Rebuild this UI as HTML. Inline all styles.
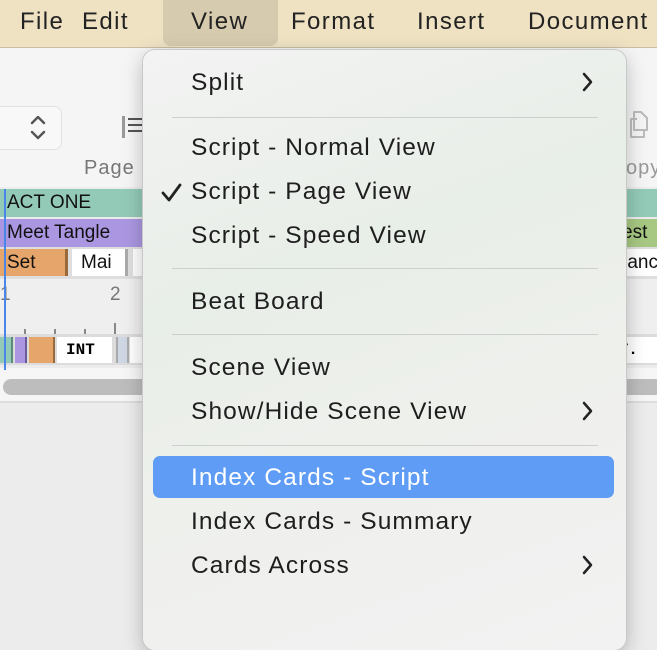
<!DOCTYPE html><html><head><style>
body{margin:0;width:657px;height:594px;overflow:hidden;position:relative;font-family:"Liberation Sans",sans-serif;background:#ececec}
.a{position:absolute}
.mb{top:0;left:0;width:657px;height:47px;background:#efe2c3;border-bottom:1px solid #c9bda3}
.mb span{position:absolute;top:8px;font-size:24px;color:#222;letter-spacing:1.4px}
.menu{left:143px;top:50px;width:483px;height:600px;border-radius:12px;background:linear-gradient(160deg,#f3f3f3 0%,#e8eee8 35%,#eef0ec 60%,#f2f2f2 100%);box-shadow:0 0 0 1px #c8c8c8,0 6px 20px rgba(0,0,0,.25)}
.it{position:absolute;left:48px;font-size:24.5px;color:#1e1e1e;letter-spacing:1.1px}
.sep{position:absolute;left:29px;width:426px;height:1px;background:#cfcfcf}
.chev{position:absolute;left:438px;width:12px;height:20px}
.bar{position:absolute;font-size:19px;color:#111;line-height:28px;padding-left:7px;box-sizing:border-box}
</style></head><body>
<div class="a" style="top:47px;left:0;width:657px;height:140px;background:#f5f5f5"></div>
<div class="a" style="left:-10px;top:106px;width:70px;height:42px;border:1px solid #e0e0e0;border-radius:8px;background:#f8f8f8"></div>
<svg class="a" style="left:29px;top:115px" width="18" height="26"><path d="M3 8 L9 2 L15 8 M3 17 L9 23 L15 17" fill="none" stroke="#555" stroke-width="2.4" stroke-linecap="round" stroke-linejoin="round"/></svg>
<div class="a" style="left:122px;top:116px;width:3px;height:22px;background:#999"></div>
<div class="a" style="left:128px;top:118px;width:14px;height:2px;background:#555;box-shadow:0 6px #555,0 12px #555"></div>
<div class="a" style="left:84px;top:157px;font-size:20px;color:#777;letter-spacing:1px">Page</div>
<div class="a" style="left:626px;top:157px;font-size:20px;color:#999;letter-spacing:1px">opy</div>
<svg class="a" style="left:624px;top:108px" width="30" height="34"><path d="M10 4 h7 l6 6 v12 h-13 z M13 11 h-6 v18 h13 v-7" fill="none" stroke="#bbb" stroke-width="2" stroke-linejoin="round"/></svg>
<div class="bar" style="left:0;top:189px;width:657px;height:28px;background:#93cab7">ACT ONE</div>
<div class="bar" style="left:0;top:219px;width:657px;height:28px;background:#ab97e1">Meet Tangle</div>
<div class="bar" style="left:590px;top:219px;width:67px;height:28px;background:#a7c883;padding-left:32px">est</div>
<div class="a" style="left:0;top:247px;width:657px;height:32px;background:#dedede"></div>
<div class="bar" style="left:0;top:249px;width:68px;height:27px;background:#e6a66b;border-right:3px solid #9a6a3c">Set</div>
<div class="bar" style="left:72px;top:249px;width:56px;height:27px;background:#fff;padding-left:9px;border-right:3px solid #aaa">Mai</div>
<div class="bar" style="left:133px;top:249px;width:20px;height:27px;background:#fff"></div>
<div class="bar" style="left:615px;top:249px;width:42px;height:27px;background:#fff;padding-left:6px">ranc</div>
<div class="a" style="left:0;top:279px;width:657px;height:55px;background:#efefef"></div>
<div class="a" style="left:0;top:284px;font-size:19px;color:#777">1</div>
<div class="a" style="left:110px;top:284px;font-size:19px;color:#777">2</div>
<div class="a" style="left:24px;top:329px;width:2px;height:6px;background:#888;box-shadow:30px 0 #888,60px 0 #888"></div>
<div class="a" style="left:114px;top:323px;width:2px;height:12px;background:#888"></div>
<div class="a" style="left:0;top:334px;width:657px;height:31px;background:#dcdcdc"></div>
<div class="a" style="left:0;top:337px;width:11px;height:26px;background:#93cab7;border-right:2px solid #5a8a78"></div>
<div class="a" style="left:15px;top:337px;width:10px;height:26px;background:#ab97e1;border-right:2px solid #6a5a9a"></div>
<div class="a" style="left:29px;top:337px;width:24px;height:26px;background:#e6a66b;border-right:2px solid #9a6a3c"></div>
<div class="a" style="left:57px;top:337px;width:55px;height:26px;background:#fff;font:bold 16px 'Liberation Mono',monospace;line-height:26px;text-indent:9px">INT</div>
<div class="a" style="left:116px;top:337px;width:9px;height:26px;background:#cfd6e4;border-left:2px solid #aaa;border-right:2px solid #aaa"></div>
<div class="a" style="left:130px;top:337px;width:20px;height:26px;background:#fff"></div>
<div class="a" style="left:605px;top:337px;width:52px;height:26px;background:#fff;font:bold 16px 'Liberation Mono',monospace;line-height:26px;text-indent:4px">XT.</div>
<div class="a" style="left:0;top:368px;width:657px;height:33px;background:#f6f6f6;border-bottom:2px solid #ddd"></div>
<div class="a" style="left:3px;top:379px;width:660px;height:16px;border-radius:8px;background:#bdbdbd"></div>
<div class="a" style="left:4px;top:189px;width:2px;height:181px;background:#4a86e8"></div>
<div class="a mb"><span style="left:20px">File</span><span style="left:82px">Edit</span>
<div class="a" style="left:163px;top:0;width:115px;height:46px;background:#d6cbaf;border-radius:0 0 8px 8px"></div>
<span style="left:191px">View</span><span style="left:291px">Format</span><span style="left:417px">Insert</span><span style="left:528px">Document</span></div>
<div class="a menu">
<div class="it" style="top:19px">Split</div><svg class="chev" style="top:22px"><path d="M3 2 L10 10 L3 18" fill="none" stroke="#222" stroke-width="2.5" stroke-linecap="round" stroke-linejoin="round"/></svg>
<div class="sep" style="top:67px"></div>
<div class="it" style="top:84px">Script - Normal View</div>
<div class="it" style="top:128px">Script - Page View</div>
<svg class="a" style="left:18px;top:132px" width="22" height="22"><path d="M2 11 L8 18 L19 3" fill="none" stroke="#222" stroke-width="2.8" stroke-linecap="round" stroke-linejoin="round"/></svg>
<div class="it" style="top:172px">Script - Speed View</div>
<div class="sep" style="top:218px"></div>
<div class="it" style="top:238px">Beat Board</div>
<div class="sep" style="top:284px"></div>
<div class="it" style="top:304px">Scene View</div>
<div class="it" style="top:348px">Show/Hide Scene View</div><svg class="chev" style="top:351px"><path d="M3 2 L10 10 L3 18" fill="none" stroke="#222" stroke-width="2.5" stroke-linecap="round" stroke-linejoin="round"/></svg>
<div class="sep" style="top:395px"></div>
<div class="a" style="left:10px;top:406px;width:461px;height:42px;border-radius:7px;background:#5f9cf5"></div>
<div class="it" style="top:414px;color:#fff">Index Cards - Script</div>
<div class="it" style="top:458px">Index Cards - Summary</div>
<div class="it" style="top:502px">Cards Across</div><svg class="chev" style="top:505px"><path d="M3 2 L10 10 L3 18" fill="none" stroke="#222" stroke-width="2.5" stroke-linecap="round" stroke-linejoin="round"/></svg>
</div>
</body></html>
